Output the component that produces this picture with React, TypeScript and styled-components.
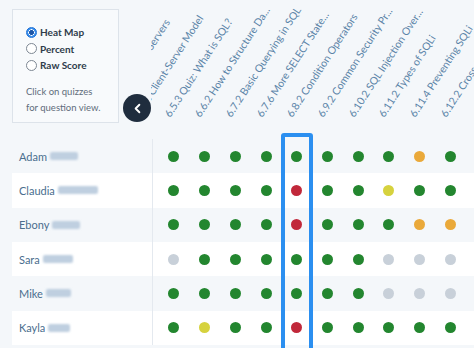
import React from 'react';
import styled, { createGlobalStyle } from 'styled-components';
import { ChevronLeft } from 'lucide-react';

type Score = 'g' | 'r' | 'y' | 'o' | 'n';

type Student = {
    first: string;
    blurWidth: number;
    scores: Score[];
};

const COL_W = 30.7;
const NAME_W = 141;
const DOTS_PAD = 5.65;
const HIGHLIGHT_COL = 4;

const SCORE_COLORS: Record<Score, string> = {
    g: '#23862f',
    r: '#c1283a',
    y: '#d6d23e',
    o: '#eaa93a',
    n: '#c8d0d9',
};

const quizzes = [
    '6.4.2 Clients and Servers',
    '6.5.2 Client-Server Model',
    '6.5.3 Quiz: What is SQL?',
    '6.6.2 How to Structure Da...',
    '6.7.2 Basic Querying in SQL',
    '6.7.6 More SELECT State...',
    '6.8.2 Condition Operators',
    '6.9.2 Common Security Pr...',
    '6.10.2 SQL Injection Over...',
    '6.11.2 Types of SQLi',
    '6.11.4 Preventing SQLi',
    '6.12.2 Cross-Site Scripting',
];

const students: Student[] = [
    { first: 'Adam', blurWidth: 28, scores: ['g', 'g', 'g', 'g', 'g', 'g', 'g', 'g', 'o', 'g'] },
    { first: 'Claudia', blurWidth: 40, scores: ['g', 'g', 'g', 'g', 'r', 'g', 'g', 'y', 'g', 'g'] },
    { first: 'Ebony', blurWidth: 28, scores: ['g', 'g', 'g', 'g', 'r', 'g', 'g', 'g', 'o', 'o'] },
    { first: 'Sara', blurWidth: 30, scores: ['n', 'g', 'g', 'g', 'g', 'g', 'g', 'n', 'n', 'n'] },
    { first: 'Mike', blurWidth: 25, scores: ['g', 'g', 'g', 'g', 'g', 'g', 'g', 'n', 'n', 'n'] },
    { first: 'Kayla', blurWidth: 22, scores: ['g', 'y', 'g', 'g', 'r', 'g', 'g', 'g', 'g', 'g'] },
];

const modes = ['Heat Map', 'Percent', 'Raw Score'];

const App: React.FC = () => {
    const highlightLeft = NAME_W + DOTS_PAD + COL_W * HIGHLIGHT_COL + COL_W / 2 - 16;

    return (
        <>
            <GlobalStyle />
            <Page>
                <Header>
                    <Side>
                        <Panel>
                            {modes.map((mode, i) => (
                                <ModeOption key={mode}>
                                    <Radio checked={i === 0} />
                                    {mode}
                                </ModeOption>
                            ))}
                            <Hint>
                                Click on quizzes
                                <br />
                                for question view.
                            </Hint>
                        </Panel>
                        <CollapseButton aria-label="Collapse">
                            <ChevronLeft size={15} strokeWidth={3} />
                        </CollapseButton>
                    </Side>
                    <HeaderStrip>
                        <HeaderTrack>
                            {quizzes.map(q => (
                                <HeadCell key={q}>
                                    <HeadLabel>{q}</HeadLabel>
                                </HeadCell>
                            ))}
                        </HeaderTrack>
                    </HeaderStrip>
                </Header>
                <Body>
                    {students.map((s, i) => (
                        <Row key={s.first} striped={i % 2 === 1}>
                            <NameCell>
                                {s.first}
                                <NameBlur w={s.blurWidth} />
                            </NameCell>
                            <Dots>
                                {s.scores.map((score, j) => (
                                    <DotCell key={j}>
                                        <Dot color={SCORE_COLORS[score]} />
                                    </DotCell>
                                ))}
                            </Dots>
                        </Row>
                    ))}
                    <Highlight style={{ left: highlightLeft }} />
                </Body>
            </Page>
        </>
    );
};

const GlobalStyle = createGlobalStyle`
    html, body {
        margin: 0;
        padding: 0;
        background: #f4f7fa;
        font-family: Lato, "Open Sans", sans-serif;
        overflow: hidden;
    }
`;

const Page = styled.div`
    width: 474px;
    height: 348px;
    overflow: hidden;
`;

const Header = styled.div`
    display: flex;
    height: 139px;
`;

const Side = styled.div`
    display: flex;
    align-items: flex-start;
    gap: 4px;
    width: 151px;
    flex-shrink: 0;
    box-sizing: border-box;
    padding: 9px 0 0 12px;
    position: relative;
    z-index: 2;
`;

const Panel = styled.div`
    width: 107px;
    height: 114px;
    box-sizing: border-box;
    border: 1px solid #dde3ea;
    background: #f8fafc;
    padding: 14px 0 0 13px;
`;

const ModeOption = styled.label`
    display: flex;
    align-items: center;
    gap: 3px;
    height: 16.5px;
    font-size: 10px;
    font-weight: 700;
    color: #2f3c4b;
`;

const Radio = styled.span<{ checked?: boolean }>`
    width: 11px;
    height: 11px;
    border-radius: 50%;
    box-sizing: border-box;
    border: 1px solid ${p => (p.checked ? '#1d6fd6' : '#7d8793')};
    background: ${p => (p.checked ? 'radial-gradient(circle, #1b55a8 0 2.2px, #ffffff 2.5px 3px, #3b90ec 3.3px)' : '#ffffff')};
`;

const Hint = styled.div`
    margin-top: 10px;
    font-size: 9.5px;
    line-height: 16px;
    color: #5f6c7b;
`;

const CollapseButton = styled.button`
    margin-top: 85px;
    width: 28px;
    height: 28px;
    border-radius: 50%;
    border: none;
    padding: 0;
    background: #1f2d3e;
    color: #ffffff;
    display: flex;
    align-items: center;
    justify-content: center;
`;

const HeaderStrip = styled.div`
    flex: 1;
    overflow: hidden;
`;

const HeaderTrack = styled.div`
    display: flex;
    height: 100%;
    margin-left: ${12 + NAME_W + DOTS_PAD - 151 - COL_W * 2}px;
`;

const HeadCell = styled.div`
    position: relative;
    width: ${COL_W}px;
    flex-shrink: 0;
`;

const HeadLabel = styled.span`
    position: absolute;
    left: 13px;
    bottom: 20px;
    white-space: nowrap;
    transform-origin: 0 100%;
    transform: rotate(-57deg);
    font-size: 10.5px;
    line-height: 12px;
    color: #5b84a8;
`;

const Body = styled.div`
    position: relative;
    margin-left: 12px;
`;

const Row = styled.div<{ striped?: boolean }>`
    display: flex;
    height: 34.33px;
    background: ${p => (p.striped ? '#ffffff' : 'transparent')};
`;

const NameCell = styled.div`
    width: ${NAME_W}px;
    flex-shrink: 0;
    box-sizing: border-box;
    border-right: 1px solid #e4e9ef;
    padding-left: 7px;
    display: flex;
    align-items: center;
    font-size: 11px;
    color: #4a6e8e;
`;

const NameBlur = styled.span<{ w: number }>`
    display: inline-block;
    width: ${p => p.w}px;
    height: 8px;
    margin-left: 3px;
    border-radius: 2px;
    background: #bfcfe0;
    filter: blur(1px);
`;

const Dots = styled.div`
    display: flex;
    padding-left: ${DOTS_PAD}px;
`;

const DotCell = styled.div`
    width: ${COL_W}px;
    display: flex;
    align-items: center;
    justify-content: center;
`;

const Dot = styled.span<{ color: string }>`
    width: 11px;
    height: 11px;
    border-radius: 50%;
    background: ${p => p.color};
`;

const Highlight = styled.div`
    position: absolute;
    top: -6px;
    bottom: -8px;
    width: 32px;
    box-sizing: border-box;
    border: 4px solid #2b8ff0;
    border-radius: 3px;
    pointer-events: none;
`;

export default App;
